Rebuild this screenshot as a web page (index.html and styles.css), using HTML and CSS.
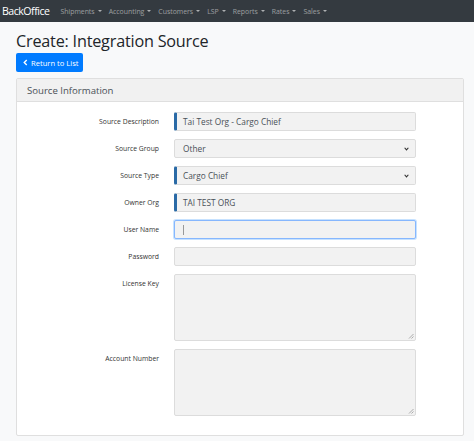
FILE: index.html
```html
<!DOCTYPE html>
<html>
<head>
<meta charset="utf-8">
<link rel="stylesheet" href="styles.css">
</head>
<body>
<nav class="navbar">
  <span class="brand">BackOffice</span>
  <ul class="nav">
    <li>Shipments <span class="caret"></span></li>
    <li>Accounting <span class="caret"></span></li>
    <li>Customers <span class="caret"></span></li>
    <li>LSP <span class="caret"></span></li>
    <li>Reports <span class="caret"></span></li>
    <li>Rates <span class="caret"></span></li>
    <li>Sales <span class="caret"></span></li>
  </ul>
</nav>
<main class="page">
  <h1 class="title">Create: Integration Source</h1>
  <a class="btn">
    <svg class="chev" viewBox="0 0 8 10" width="5" height="7"><path d="M6 1 L2 5 L6 9" fill="none" stroke="#fff" stroke-width="2.2"/></svg>
    Return to List
  </a>
  <section class="card">
    <div class="card-header">Source Information</div>
    <div class="card-body">
      <div class="label">Source Description</div>
      <div class="field req">Tai Test Org - Cargo Chief</div>

      <div class="label">Source Group</div>
      <div class="field select">Other<svg class="arrow" viewBox="0 0 8 6" width="5" height="4"><path d="M1 1 L4 4.5 L7 1" fill="none" stroke="#333" stroke-width="1.8"/></svg></div>

      <div class="label">Source Type</div>
      <div class="field select req">Cargo Chief<svg class="arrow" viewBox="0 0 8 6" width="5" height="4"><path d="M1 1 L4 4.5 L7 1" fill="none" stroke="#333" stroke-width="1.8"/></svg></div>

      <div class="label">Owner Org</div>
      <div class="field req">TAI TEST ORG</div>

      <div class="label">User Name</div>
      <div class="field focus"><span class="cursor"></span></div>

      <div class="label">Password</div>
      <div class="field"></div>

      <div class="label">License Key</div>
      <div class="field area"><svg class="grip" viewBox="0 0 6 6" width="6" height="6"><path d="M5.5 1 L1 5.5 M5.5 3.5 L3.5 5.5" stroke="#999" stroke-width="0.8"/></svg></div>

      <div class="label">Account Number</div>
      <div class="field area"><svg class="grip" viewBox="0 0 6 6" width="6" height="6"><path d="M5.5 1 L1 5.5 M5.5 3.5 L3.5 5.5" stroke="#999" stroke-width="0.8"/></svg></div>
    </div>
  </section>
</main>
</body>
</html>
```

FILE: styles.css
```css
* { box-sizing: border-box; }
html, body { margin: 0; padding: 0; }
body {
  background: #f8f9fa;
  font-family: "Open Sans", "Noto Sans", sans-serif;
  color: #212529;
  width: 474px;
  height: 441px;
  overflow: hidden;
}
.navbar {
  height: 22px;
  background: #343a40;
  display: flex;
  align-items: center;
  padding-left: 2px;
}
.brand {
  color: #fff;
  font-size: 10.6px;
  letter-spacing: -0.5px;
  margin-right: 11px;
}
.nav {
  list-style: none;
  margin: 0;
  padding: 0;
  display: flex;
  gap: 7px;
}
.nav li {
  color: rgba(255,255,255,.5);
  font-size: 6.9px;
  display: flex;
  align-items: center;
  gap: 3px;
}
.caret {
  display: inline-block;
  width: 0; height: 0;
  border-left: 2px solid transparent;
  border-right: 2px solid transparent;
  border-top: 2.5px solid rgba(255,255,255,.6);
}
.page {
  padding: 9px 10px 0 16px;
}
.title {
  margin: 0;
  font-weight: 400;
  font-size: 16.2px;
  line-height: 20px;
  letter-spacing: -0.2px;
}
.btn {
  display: inline-flex;
  align-items: center;
  gap: 3px;
  margin-top: 2px;
  height: 19px;
  width: 67px;
  padding-left: 7px;
  background: #007bff;
  color: #fff;
  border-radius: 2px;
  font-size: 7.6px;
  vertical-align: top;
}
.card {
  margin-top: 5px;
  width: 448px;
  background: #fff;
  border: 1px solid #dfdfdf;
  border-radius: 2px;
}
.card-header {
  height: 23px;
  background: #f1f1f1;
  border-bottom: 1px solid #dfdfdf;
  font-size: 9.6px;
  color: #495057;
  padding-left: 10px;
  display: flex;
  align-items: center;
}
.card-body {
  display: grid;
  grid-template-columns: 142px 242px;
  column-gap: 15px;
  row-gap: 8px;
  padding: 10px 0 19px 0;
}
.label {
  text-align: right;
  font-size: 6.8px;
  color: #333;
  line-height: 19px;
}
.field {
  position: relative;
  height: 19px;
  background: #f2f2f2;
  border: 1px solid #dcdcdc;
  border-radius: 2px;
  font-size: 8.3px;
  color: #495057;
  padding-left: 8px;
  display: flex;
  align-items: center;
}
.field.req {
  border-left: 3px solid #2a6aa6;
  padding-left: 6px;
}
.select .arrow {
  position: absolute;
  right: 6px;
  top: 7px;
}
.focus {
  border-color: #86b7fe;
  box-shadow: 0 0 0 1px rgba(0,123,255,.22);
}
.cursor {
  display: inline-block;
  width: 1px;
  height: 10px;
  background: #999;
}
.area {
  height: 67px;
}
.grip {
  position: absolute;
  right: 1px;
  bottom: 1px;
}
```
